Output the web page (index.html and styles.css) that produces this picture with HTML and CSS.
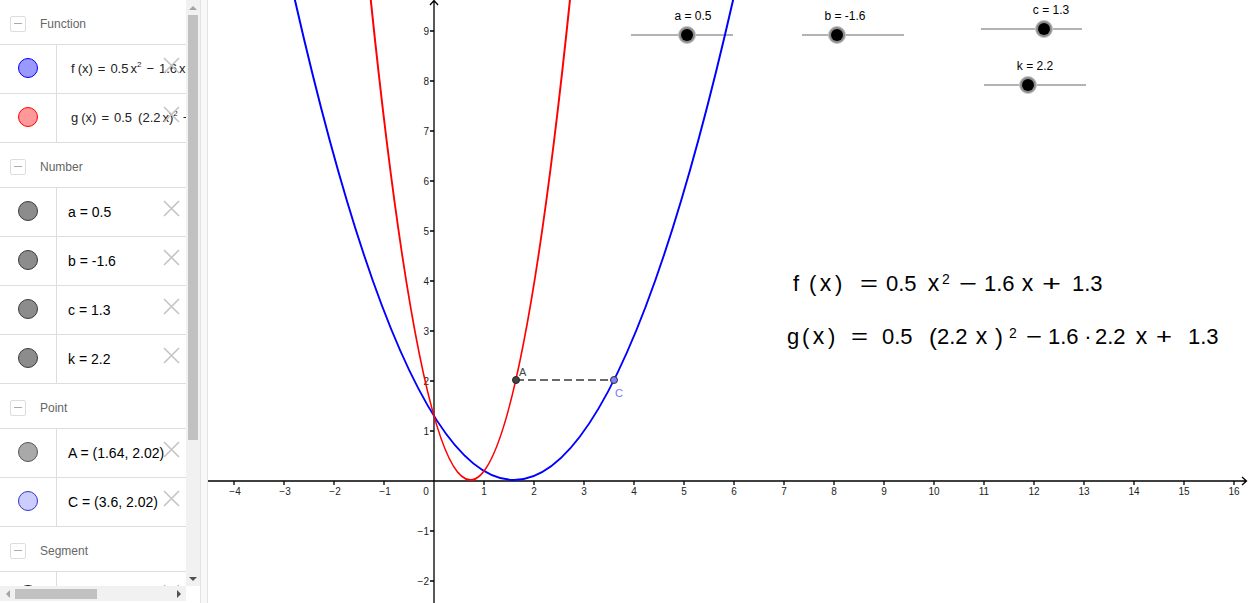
FILE: index.html
```html
<!DOCTYPE html>
<html>
	<head>
		<meta charset="UTF-8">
		<title>Parabel mit Schiebereglern</title>
		<link rel="stylesheet" href="styles.css">
	</head>
	<body>
		<div id="app">

			<!-- Algebra-Ansicht -->
			<div id="algebra">
				<div class="list">
					<div class="group"><span class="toggle"></span>Function</div>
					<div class="item">
						<div class="marble-cell"><span class="marble m-f"></span></div>
						<div class="value math">f<i class="s2"></i>(x)<i class="eq">=</i>0.5<i class="s1"></i>x<sup>2</sup><i class="eq">−</i>1.6<i class="s1"></i>x<i class="eq">+</i>1.3</div>
						<span class="del"><svg width="17" height="17" viewBox="0 0 17 17"><path d="M1 1L16 16M16 1L1 16"/></svg></span>
					</div>
					<div class="item">
						<div class="marble-cell"><span class="marble m-g"></span></div>
						<div class="value math">g<i class="s2"></i>(x)<i class="eq">=</i>0.5<i class="s3"></i>(2.2<i class="s1"></i>x)<sup>2</sup><i class="eq">−</i>1.6 · 2.2<i class="s1"></i>x<i class="eq">+</i>1.3</div>
						<span class="del"><svg width="17" height="17" viewBox="0 0 17 17"><path d="M1 1L16 16M16 1L1 16"/></svg></span>
					</div>

					<div class="group"><span class="toggle"></span>Number</div>
					<div class="item">
						<div class="marble-cell"><span class="marble m-num"></span></div>
						<div class="value">a = 0.5</div>
						<span class="del"><svg width="17" height="17" viewBox="0 0 17 17"><path d="M1 1L16 16M16 1L1 16"/></svg></span>
					</div>
					<div class="item">
						<div class="marble-cell"><span class="marble m-num"></span></div>
						<div class="value">b = -1.6</div>
						<span class="del"><svg width="17" height="17" viewBox="0 0 17 17"><path d="M1 1L16 16M16 1L1 16"/></svg></span>
					</div>
					<div class="item">
						<div class="marble-cell"><span class="marble m-num"></span></div>
						<div class="value">c = 1.3</div>
						<span class="del"><svg width="17" height="17" viewBox="0 0 17 17"><path d="M1 1L16 16M16 1L1 16"/></svg></span>
					</div>
					<div class="item">
						<div class="marble-cell"><span class="marble m-num"></span></div>
						<div class="value">k = 2.2</div>
						<span class="del"><svg width="17" height="17" viewBox="0 0 17 17"><path d="M1 1L16 16M16 1L1 16"/></svg></span>
					</div>

					<div class="group"><span class="toggle"></span>Point</div>
					<div class="item">
						<div class="marble-cell"><span class="marble m-a"></span></div>
						<div class="value">A = (1.64, 2.02)</div>
						<span class="del"><svg width="17" height="17" viewBox="0 0 17 17"><path d="M1 1L16 16M16 1L1 16"/></svg></span>
					</div>
					<div class="item">
						<div class="marble-cell"><span class="marble m-c"></span></div>
						<div class="value">C = (3.6, 2.02)</div>
						<span class="del"><svg width="17" height="17" viewBox="0 0 17 17"><path d="M1 1L16 16M16 1L1 16"/></svg></span>
					</div>

					<div class="group"><span class="toggle"></span>Segment</div>
					<div class="item">
						<div class="marble-cell"><span class="marble m-seg"></span></div>
						<div class="value">h = 1.96</div>
						<span class="del"><svg width="17" height="17" viewBox="0 0 17 17"><path d="M1 1L16 16M16 1L1 16"/></svg></span>
					</div>
				</div>

				<div class="vbar">
					<span class="arr up"></span>
					<span class="thumb"></span>
					<span class="fill"></span>
					<span class="arr down"></span>
				</div>
				<div class="hbar">
					<span class="arr left"></span>
					<span class="thumb"></span>
					<span class="fill"></span>
					<span class="arr right"></span>
				</div>
				<div class="corner"></div>
			</div>

			<div class="splitter"></div>

			<!-- Grafik-Ansicht: 1 Einheit = 50px, Ursprung bei (434, 481) -->
			<div id="graphics">
				<svg width="1040" height="603" viewBox="208 0 1040 603">
					<!-- Achsen -->
					<g class="axis">
						<path d="M208 481H1246M1242 477L1246.5 481L1242 485"/>
						<path d="M434 603V1M430 5L434 0.5L438 5"/>
						<path d="M234 481v4M284 481v4M334 481v4M384 481v4M484 481v4M534 481v4M584 481v4M634 481v4M684 481v4M734 481v4M784 481v4M834 481v4M884 481v4M934 481v4M984 481v4M1034 481v4M1084 481v4M1134 481v4M1184 481v4M1234 481v4"/>
						<path d="M430 31h4M430 81h4M430 131h4M430 181h4M430 231h4M430 281h4M430 331h4M430 381h4M430 431h4M430 531h4M430 581h4"/>
					</g>
					<g class="ticks-x">
						<text x="235" y="495">−4</text>
						<text x="285" y="495">−3</text>
						<text x="335" y="495">−2</text>
						<text x="385" y="495">−1</text>
						<text x="426" y="495">0</text>
						<text x="484" y="495">1</text>
						<text x="534" y="495">2</text>
						<text x="584" y="495">3</text>
						<text x="634" y="495">4</text>
						<text x="684" y="495">5</text>
						<text x="734" y="495">6</text>
						<text x="784" y="495">7</text>
						<text x="834" y="495">8</text>
						<text x="884" y="495">9</text>
						<text x="934" y="495">10</text>
						<text x="984" y="495">11</text>
						<text x="1034" y="495">12</text>
						<text x="1084" y="495">13</text>
						<text x="1134" y="495">14</text>
						<text x="1184" y="495">15</text>
						<text x="1234" y="495">16</text>
					</g>
					<g class="ticks-y">
						<text x="429" y="35">9</text>
						<text x="429" y="85">8</text>
						<text x="429" y="135">7</text>
						<text x="429" y="185">6</text>
						<text x="429" y="235">5</text>
						<text x="429" y="285">4</text>
						<text x="429" y="335">3</text>
						<text x="429" y="385">2</text>
						<text x="429" y="435">1</text>
						<text x="429" y="535">−1</text>
						<text x="429" y="585">−2</text>
					</g>

					<!-- Schieberegler -->
					<g class="slider">
						<path d="M631 35H733"/>
						<circle class="ring" cx="687" cy="35" r="8.5"/>
						<circle class="dot" cx="687" cy="35" r="6"/>
						<text x="693" y="20">a = 0.5</text>
					</g>
					<g class="slider">
						<path d="M802 35H904"/>
						<circle class="ring" cx="837" cy="35" r="8.5"/>
						<circle class="dot" cx="837" cy="35" r="6"/>
						<text x="845" y="20">b = -1.6</text>
					</g>
					<g class="slider">
						<path d="M981 29H1082"/>
						<circle class="ring" cx="1044" cy="29" r="8.5"/>
						<circle class="dot" cx="1044" cy="29" r="6"/>
						<text x="1051" y="14">c = 1.3</text>
					</g>
					<g class="slider">
						<path d="M984 85H1086"/>
						<circle class="ring" cx="1028" cy="85" r="8.5"/>
						<circle class="dot" cx="1028" cy="85" r="6"/>
						<text x="1035" y="70">k = 2.2</text>
					</g>

					<!-- f und g als quadratische Bezierkurven -->
					<path class="curve-f" d="M284 -49Q514 1009 744 -49"/>
					<path class="curve-g" d="M360.36 -105.65Q470.36 1065.65 580.36 -105.65"/>

					<!-- Strecke A-C und Punkte -->
					<path class="seg" d="M516 380H614"/>
					<circle class="pt-a" cx="516" cy="380" r="3.5"/>
					<circle class="pt-c" cx="614" cy="380" r="3.5"/>
					<text class="lbl-a" x="519" y="376">A</text>
					<text class="lbl-c" x="615" y="397">C</text>

					<!-- Formeln -->
					<g class="formula">
						<text x="793" y="291">f</text>
						<text x="809" y="291">(</text>
						<text class="var" x="825.5" y="291">x</text>
						<text x="835" y="291">)</text>
						<text x="860" y="291" textLength="18" lengthAdjust="spacingAndGlyphs">=</text>
						<text x="886" y="291">0.5</text>
						<text class="var" x="933.5" y="291">x</text>
						<text class="sup" x="942" y="284">2</text>
						<text x="959" y="291" textLength="18" lengthAdjust="spacingAndGlyphs">−</text>
						<text x="984" y="291">1.6</text>
						<text class="var" x="1027.5" y="291">x</text>
						<text x="1042" y="291" textLength="19" lengthAdjust="spacingAndGlyphs">+</text>
						<text x="1072" y="291">1.3</text>

						<text x="787" y="344">g</text>
						<text x="802" y="344">(</text>
						<text class="var" x="818.5" y="344">x</text>
						<text x="828" y="344">)</text>
						<text x="851" y="344" textLength="17" lengthAdjust="spacingAndGlyphs">=</text>
						<text x="882" y="344">0.5</text>
						<text class="big" x="929" y="345">(</text>
						<text x="937" y="344">2.2</text>
						<text class="var" x="981.5" y="344">x</text>
						<text class="big" x="995" y="345">)</text>
						<text class="sup" x="1009" y="338">2</text>
						<text x="1026" y="344" textLength="16" lengthAdjust="spacingAndGlyphs">−</text>
						<text x="1048" y="344">1.6</text>
						<text class="dot" x="1088" y="344">·</text>
						<text x="1095" y="344">2.2</text>
						<text class="var" x="1141.5" y="344">x</text>
						<text x="1156" y="344" textLength="16" lengthAdjust="spacingAndGlyphs">+</text>
						<text x="1188" y="344">1.3</text>
					</g>
				</svg>
			</div>

		</div>
	</body>
</html>
```

FILE: styles.css
```css
*{
	margin:0; padding:0;
}

html,body{
	height:100%;
}

body{
	font-family:"Liberation Sans", Arial, sans-serif;
	background:#fff;
	overflow:hidden;
}

#app{
	height:100%;
	display:flex;
}

/* ---------- Algebra ---------- */

#algebra{
	width:200px;
	flex:none;
	display:grid;
	grid-template-columns:186px 14px;
	grid-template-rows:586px 15px 1fr;
}

.list{
	overflow:hidden;
}

.group{
	height:41px;
	padding-top:3px;
	border-bottom:1px solid #ddd;
	display:flex;
	align-items:center;
	font-size:12px;
	color:#666;
}

.toggle{
	width:14px;
	height:14px;
	margin:0 14px 0 10px;
	border:1px solid #ddd;
	border-radius:2px;
	display:flex;
	align-items:center;
	justify-content:center;
}

.toggle::after{
	content:"";
	width:8px;
	height:1px;
	background:#aaa;
}

.item{
	height:48px;
	border-bottom:1px solid #ddd;
	display:flex;
	position:relative;
}

.marble-cell{
	width:56px;
	flex:none;
	border-right:1px solid #ddd;
	display:flex;
	align-items:center;
	justify-content:center;
}

.marble{
	width:18px;
	height:18px;
	border-radius:50%;
	border:1px solid #333;
	margin-top:-3px;
}

.m-f{ background:#9999ff; border-color:#0000ff; }
.m-g{ background:#ff9999; border-color:#ff0000; }
.m-num{ background:#8c8c8c; border-color:#3a3a3a; }
.m-a{ background:#a9a9a9; border-color:#555; }
.m-c{ background:#ccccff; border-color:#3333cc; }
.m-seg{ background:#555; border-color:#222; }

.value{
	flex:1;
	padding-left:11px;
	line-height:48px;
	font-size:14px;
	color:#000;
	white-space:nowrap;
	overflow:hidden;
}

.math{
	font-size:13px;
	padding-left:14px;
	color:#222;
}

.math i{
	font-style:normal;
	display:inline-block;
}

.math .eq{ margin:0 5px; }
.math .s1{ width:2px; }
.math .s2{ width:3px; }
.math .s3{ width:6px; }

.math sup{
	font-size:8px;
	line-height:0;
	vertical-align:6px;
}

.del{
	position:absolute;
	right:6px;
	top:12px;
	width:17px;
	height:17px;
}

.del path{
	stroke:#c4c4c4;
	stroke-width:1.6;
	fill:none;
}

/* Scrollbalken */

.vbar{
	background:#f1f1f1;
	display:flex;
	flex-direction:column;
	align-items:center;
}

.vbar .thumb{
	width:10px;
	height:425px;
	background:#c1c1c1;
}

.hbar{
	background:#f1f1f1;
	display:flex;
	align-items:center;
}

.hbar .thumb{
	width:82px;
	height:10px;
	background:#c1c1c1;
}

.fill{
	flex:1;
}

.arr{
	width:15px;
	height:15px;
	flex:none;
	display:flex;
	align-items:center;
	justify-content:center;
}

.arr::after{
	content:"";
	border:4px solid transparent;
}

.up::after{ border-bottom-color:#a3a3a3; border-top-width:0; }
.down::after{ border-top-color:#505050; border-bottom-width:0; }
.left::after{ border-right-color:#a3a3a3; border-left-width:0; }
.right::after{ border-left-color:#505050; border-right-width:0; }

.corner{
	background:#fff;
}

.splitter{
	width:6px;
	flex:none;
	background:#f8f8f8;
	border-left:1px solid #e2e2e2;
	border-right:1px solid #e2e2e2;
}

/* ---------- Grafik ---------- */

#graphics{
	flex:1;
	overflow:hidden;
	background:#fff;
}

#graphics svg{
	display:block;
	font-family:"Liberation Sans", Arial, sans-serif;
}

.axis path{
	stroke:#000;
	stroke-width:1.3;
	fill:none;
}

.ticks-x text{
	font-size:10px;
	fill:#222;
	text-anchor:middle;
}

.ticks-y text{
	font-size:10px;
	fill:#222;
	text-anchor:end;
}

.slider path{
	stroke:#666;
	stroke-width:1;
}

.slider .ring{
	fill:#8c8c8c;
	stroke:#c8c8c8;
	stroke-width:1;
}

.slider .dot{
	fill:#000;
}

.slider text{
	font-size:12px;
	fill:#000;
	text-anchor:middle;
}

.curve-f{
	fill:none;
	stroke:#0000ff;
	stroke-width:2;
}

.curve-g{
	fill:none;
	stroke:#ff0000;
	stroke-width:2;
}

.seg{
	stroke:#6a6a6a;
	stroke-width:2;
	stroke-dasharray:8 4;
}

.pt-a{
	fill:#444;
	stroke:#222;
	stroke-width:1;
}

.pt-c{
	fill:#7f7fff;
	stroke:#333;
	stroke-width:1;
}

.lbl-a{
	font-size:11px;
	fill:#444;
}

.lbl-c{
	font-size:11px;
	fill:#7777ff;
}

.formula text{
	font-size:22px;
	fill:#000;
}

.formula .var{
	font-size:23px;
	text-anchor:middle;
}

.formula .dot{
	text-anchor:middle;
}

.formula .sup{
	font-size:14px;
}

.formula .big{
	font-size:24px;
}
```
